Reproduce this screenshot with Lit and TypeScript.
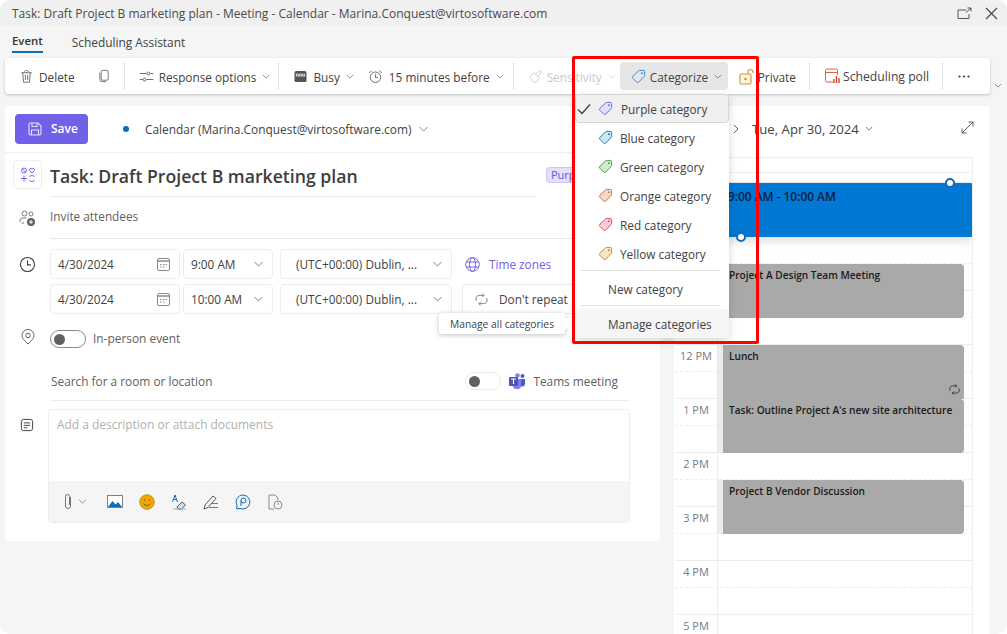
import { LitElement, html, css, svg } from "lit";
import { customElement } from "lit/decorators.js";

const chev = (cls = "chev") => html`<svg class=${cls} viewBox="0 0 10 6"><path d="M1 1l4 4 4-4" fill="none" stroke="currentColor" stroke-width="1"/></svg>`;
const tag = (stroke: string, fill: string) => html`<svg class="tag" viewBox="0 0 16 16"><path d="M9.2 1.5h4a1.3 1.3 0 0 1 1.3 1.3v4.1a1.5 1.5 0 0 1-.45 1L8.2 14a1.5 1.5 0 0 1-2.1 0L2 9.9a1.5 1.5 0 0 1 0-2.1l6.1-5.85a1.5 1.5 0 0 1 1.1-.45z" fill=${fill} stroke=${stroke} stroke-width="1"/><circle cx="11.6" cy="4.4" r="1" fill=${stroke}/></svg>`;
const ico = (w: number, body: unknown) => html`<svg width=${w} height=${w} viewBox="0 0 20 20" fill="none" stroke="#616161" stroke-width="1.2">${body}</svg>`;

const repeat = (w = 16, c = "#616161") => html`<svg width=${w} height=${w} viewBox="0 0 20 20" fill="none" stroke=${c} stroke-width="1.2"><path d="M11 2l2.500 2.500L11 7M13 4.500H7a4.500 4.500 0 0 0-3.500 7.300M9 18l-2.500-2.500L9 13M7 15.500h6a4.500 4.500 0 0 0 3.500-7.300"/></svg>`;

const cats: [string, string, string][] = [
  ["Blue category", "#1c7a9c", "#c9eaf5"],
  ["Green category", "#3f9a3f", "#cdeccd"],
  ["Orange category", "#c9703f", "#f5d9c8"],
  ["Red category", "#d94a5c", "#f9ced4"],
  ["Yellow category", "#b8883a", "#f8e6c0"],
];
const hours = ["9 AM", "10 AM", "11 AM", "12 PM", "1 PM", "2 PM", "3 PM", "4 PM", "5 PM"];
const events: { t: string; top: number; h: number; rep?: boolean; flat?: boolean }[] = [
  { t: "Project A Design Team Meeting", top: 91, h: 54 },
  { t: "Lunch", top: 172, h: 54, rep: true, flat: true },
  { t: "Task: Outline Project A's new site architecture", top: 226, h: 54 },
  { t: "Project B Vendor Discussion", top: 307, h: 54 },
];

@customElement("app-root")
export class AppRoot extends LitElement {
  static styles = css`
    :host { display: block; height: 100vh; overflow: hidden; background: #fff; font-family: "Open Sans", "Noto Sans", sans-serif; color: #424242; font-size: 12px; }
    * { box-sizing: border-box; }
    svg { display: block; flex: none; }
    .win { position: relative; height: 100%; background: #f5f5f5; border-radius: 10px; overflow: hidden; display: flex; flex-direction: column; }
    .titlebar { height: 26px; flex: none; background: #f0f0f0; display: flex; align-items: center; padding: 0 9px 0 12px; color: #4a4a4a; font-size: 12px; }
    .titlebar .sp { flex: 1; }
    .titlebar .wbtn { margin-left: 13px; color: #555; }
    .tabs { height: 32px; flex: none; display: flex; align-items: stretch; padding-left: 12px; gap: 29px; font-size: 11.9px; color: #424242; }
    .tab { display: flex; align-items: center; padding-top: 4px; height: 27px; }
    .tab.on { font-size: 11.4px; font-weight: 600; color: #333; border-bottom: 2px solid #0f6cbd; }
    .tbrow { flex: none; position: relative; height: 36px; margin: 0 17px 12px 5px; background: #fff; border-radius: 4px; box-shadow: 0 1px 3px rgba(0,0,0,.22); display: flex; align-items: center; font-size: 11.8px; color: #424242; }
    .tb { display: flex; align-items: center; height: 28px; white-space: nowrap; }
    .tb > span { padding-top: 1px; }
    .tb .chev, .chev { width: 8px; height: 5px; color: #757575; }
    .div { width: 1px; height: 28px; background: #e2e2e2; flex: none; }
    .tb-del { margin-left: 14px; gap: 5px; }
    .tb-copy { margin-left: 22px; margin-right: 13px; }
    .tb-resp { margin-left: 14px; gap: 5px; margin-right: 8px; }
    .tb-resp .c { margin-left: 1px; }
    .tb-busy { margin-left: 15px; gap: 6px; }
    .tb-alarm { margin-left: 14px; gap: 6px; margin-right: 9px; }
    .tb-sens { margin-left: 14px; gap: 4px; color: #c8c8c8; }
    .tb-sens .c { margin-left: 2px; }
    .tb-sens .chev { color: #d0d0d0; }
    .tb-cat { margin-left: 4px; width: 108px; background: #e6e6e6; border-radius: 4px; padding-left: 11px; gap: 4px; }
    .tb-cat .c { margin-left: 2px; }
    .tb-priv { margin-left: 11px; gap: 3px; margin-right: 13px; }
    .tb-poll { margin-left: 14px; gap: 3px; margin-right: 13px; font-size: 12.2px; }
    .tb-more { margin-left: 15px; }
    .tb-chev { position: absolute; right: -12px; top: 25px; }
    .main { flex: 1; min-height: 0; display: flex; align-items: flex-start; gap: 14px; padding-left: 5px; }
    .left { width: 655px; background: #fff; border-radius: 4px; padding-bottom: 18px; }
    .saverow { height: 47px; border-bottom: 1px solid #f0f0f0; display: flex; align-items: center; padding: 0 0 1px 10px; }
    .save { width: 73px; height: 30px; border-radius: 4px; background: #7160e8; color: #fff; font-weight: 600; font-size: 12px; display: flex; align-items: center; padding-left: 13px; gap: 9px; }
    .dot { width: 6px; height: 6px; border-radius: 50%; background: #0f6cbd; margin-left: 35px; }
    .cal { margin-left: 16px; font-size: 11.9px; color: #424242; }
    .saverow .chev { margin-left: 7px; width: 11px; height: 6px; color: #8a8a8a; }
    .titlerow { height: 44px; display: flex; padding-left: 8px; }
    .apps { margin-top: 7px; width: 29px; height: 29px; border: 1px solid #eee; border-radius: 4px; display: flex; align-items: center; justify-content: center; }
    .ttl { margin-left: 8px; width: 485px; border-bottom: 1px solid #ececec; font-size: 17.65px; font-weight: 600; color: #3d3d3d; display: flex; align-items: center; padding-top: 2px; }
    .badge { margin: 14px 0 0 11px; height: 16px; width: 40px; background: #e4dffb; border: 1px solid #cfc8f5; border-radius: 3px; color: #6a5bd8; font-size: 11px; line-height: 14px; padding-left: 4px; overflow: hidden; }
    .row { display: flex; }
    .ic { width: 45px; flex: none; display: flex; justify-content: center; align-items: center; }
    .invite { height: 42px; }
    .invite .f { width: 580px; border-bottom: 1px solid #e8e8e8; color: #616161; font-size: 11.8px; display: flex; align-items: center; padding-bottom: 4px; }
    .dates { margin-top: 10px; }
    .dates .ic { height: 30px; }
    .dcol { display: flex; flex-direction: column; gap: 5px; }
    .drow { display: flex; height: 30px; align-items: stretch; }
    .inp { border: 1px solid #ececec; border-radius: 4px; display: flex; align-items: center; justify-content: space-between; padding: 0 9px 0 7px; font-size: 11.8px; color: #424242; white-space: nowrap; }
    .i-date { width: 130px; }
    .i-time { width: 90px; margin-left: 3px; padding-right: 8px; }
    .i-tz { width: 172px; margin-left: 7px; padding: 0 8px 0 15px; }
    .i-tz .chev, .i-time .chev { width: 11px; height: 6px; color: #808080; }
    .tz { margin-left: 13px; display: flex; align-items: center; gap: 9px; color: #7160e8; font-size: 11.8px; }
    .rep { margin-left: 10px; width: 160px; padding-left: 11px; justify-content: flex-start; gap: 10px; }
    .person { margin-top: 16px; height: 18px; align-items: center; color: #616161; font-size: 11.9px; gap: 7px; }
    .person span { margin-top: -2px; }
    .person .ic { margin-right: -7px; margin-top: -4px; }
    .tog { width: 36px; height: 18px; border: 1px solid #8a8a8a; border-radius: 9px; display: flex; align-items: center; padding-left: 3px; }
    .tog i { width: 11px; height: 11px; border-radius: 50%; background: #616161; }
    .tog.lt { border-color: #ececec; padding-left: 3px; }
    .search { margin: 15px 0 0 45px; width: 580px; height: 38px; border-bottom: 1px solid #ececec; display: flex; align-items: center; padding: 0 12px 1px 1px; font-size: 11.85px; color: #616161; }
    .search .sp { flex: 1; }
    .teams { margin-left: 8px; margin-right: 8px; }
    .desc { margin-top: 8px; padding-right: 30px; }
    .desc .ic { width: 43px; height: 31px; align-items: center; }
    .box { width: 582px; height: 114px; border: 1px solid #ececec; border-radius: 4px; display: flex; flex-direction: column; overflow: hidden; }
    .ph { flex: 1; padding: 6px 8px; color: #b0b0b0; font-size: 11.95px; }
    .bt { height: 41px; background: #f5f5f5; display: flex; align-items: center; padding-left: 14px; }
    .bt .chev { margin-left: 5px; width: 9px; height: 5px; }
    .bt svg.b { margin-left: 16px; }
    .bt svg.b0 { margin-left: 20px; }
    .bt svg.bl { margin-left: 17px; }
    .right { width: 315px; align-self: stretch; background: #fff; border-radius: 4px 4px 0 0; display: flex; flex-direction: column; padding-right: 16px; overflow: hidden; }
    .chead { height: 51px; flex: none; display: flex; align-items: center; font-size: 13.2px; color: #424242; padding-left: 59px; padding-bottom: 6px; }
    .chead .gt { margin-right: 13px; width: 6px; height: 10px; }
    .chead .chev { margin-left: 6px; color: #616161; }
    .chead .exp { margin-left: auto; margin-right: -1px; margin-top: -3px; }
    .allday { height: 16px; flex: none; margin-left: 43px; border: 1px solid #eee; }
    .grid { flex: 1; position: relative; overflow: hidden; border-right: 1px solid #eee; margin-left: 1px; }
    .stub { height: 9px; margin-left: 42px; border-left: 1px solid #eee; }
    .hr { position: relative; height: 54px; display: grid; grid-template-columns: 43px 1fr; border-top: 1px solid #ececec; }
    .hr::after { content: ""; position: absolute; left: 0; right: 0; top: 26px; border-bottom: 1px dashed #ececec; }
    .hr .lb { text-align: center; font-size: 11px; color: #7a7a7a; padding-top: 3px; border-right: 1px solid #ececec; }
    .ev { position: absolute; left: 42px; right: 8px; border-left: 6px solid #ececec; }
    .ev .in { height: 100%; background: #a9a9a9; border-radius: 0 4px 4px 0; padding: 4px 6px; font-size: 10.1px; font-weight: 600; color: #1a1a1a; position: relative; }
    .ev.flat .in { border-radius: 0 4px 0 0; }
    .ev .rp { position: absolute; right: 3px; bottom: 3px; }
    .blue { position: absolute; left: 43px; right: 0; top: 10px; height: 54px; background: #0078d4; border-radius: 1px; box-shadow: 0 4px 10px rgba(0,0,0,.14); padding: 5px 10px; font-size: 11.9px; font-weight: 600; color: #10203a; }
    .hd { position: absolute; width: 10px; height: 10px; border-radius: 50%; background: #fff; border: 2px solid #0f6cbd; }
    .hd.a { top: -5px; left: 227px; }
    .hd.b { top: 49px; left: 18px; }
    .menu { position: absolute; left: 575px; top: 94px; width: 154px; height: 244px; background: #fff; border-radius: 4px; box-shadow: 0 3px 10px rgba(0,0,0,.16); display: flex; flex-direction: column; font-size: 11.8px; color: #424242; }
    .mi { height: 29px; flex: none; display: flex; align-items: center; padding-left: 23px; gap: 7px; }
    .mi.sel { background: #f0f0f0; border: 1px solid #d6d6d6; border-radius: 4px; padding-left: 0; gap: 0; }
    .mi.sel .ck { margin: 0 7px 0 1px; }
    .mi.sel .tag { margin-right: 8px; }
    .mi.tx { padding-left: 33px; }
    .tag { width: 15px; height: 15px; flex: none; }
    .sep { height: 1px; background: #e2e2e2; margin: 2px 9px 3px 5px; flex: none; }
    .mi.hov { background: #f5f5f5; }
    .tip { position: absolute; left: 439px; top: 313px; width: 126px; height: 21px; background: #fff; border-radius: 2px; box-shadow: 0 1px 5px rgba(0,0,0,.25); font-size: 10.3px; color: #424242; display: flex; align-items: center; padding-left: 11px; white-space: nowrap; }
    .tip::after { content: ""; position: absolute; right: -5px; top: 6px; width: 9px; height: 9px; background: #fff; transform: rotate(45deg); }
    .red { position: absolute; left: 572px; top: 56px; width: 187px; height: 288px; border: 3px solid #f00; border-radius: 2px; pointer-events: none; }
  `;

  render() {
    return html`<div class="win">
      <div class="titlebar">
        <span>Task: Draft Project B marketing plan - Meeting - Calendar - Marina.Conquest@virtosoftware.com</span>
        <span class="sp"></span>
        <svg class="wbtn" width="15" height="13" viewBox="0 0 15 13" fill="none" stroke="#555"><path d="M9 3H1v8.500h11V7M9 5.500L14 1M10.500 1H14v3.500"/></svg>
        <svg class="wbtn" width="13" height="13" viewBox="0 0 13 13" fill="none" stroke="#444" stroke-width="1.100"><path d="M1 1l11 11M12 1L1 12"/></svg>
      </div>
      <div class="tabs"><div class="tab on">Event</div><div class="tab">Scheduling Assistant</div></div>
      <div class="tbrow">
        <div class="tb tb-del">${ico(15, svg`<path d="M3 5h14M5 5l1 12.500h8L15 5M7 3.500C8 1.500 12 1.500 13 3.500M8.500 8v6.500M11.500 8v6.500"/>`)}<span>Delete</span></div>
        <div class="tb tb-copy">${ico(14, svg`<rect x="6" y="2" width="10" height="14" rx="2"/><path d="M4 5v10a3 3 0 0 0 3 3h6"/>`)}</div>
        <div class="div"></div>
        <div class="tb tb-resp">${ico(15, svg`<path d="M1 6h9M15 6h4M1 14h4M10 14h9"/><circle cx="12.500" cy="6" r="2"/><circle cx="7.500" cy="14" r="2"/>`)}<span>Response options</span><span class="c">${chev()}</span></div>
        <div class="div"></div>
        <div class="tb tb-busy"><svg width="13" height="13" viewBox="0 0 14 14"><rect x="0.500" y="1" width="13" height="12" rx="2" fill="#555"/><path d="M2 4h10v3H2z" fill="#ddd"/><path d="M3 7l2-3M6 7l2-3M9 7l2-3" stroke="#555" stroke-width=".8"/></svg><span>Busy</span><span class="c">${chev()}</span></div>
        <div class="tb tb-alarm">${ico(15, svg`<circle cx="10" cy="11" r="7"/><path d="M10 7v4.500h3.500M1.500 5.500L5 2M18.500 5.500L15 2"/>`)}<span>15 minutes before</span><span class="c">${chev()}</span></div>
        <div class="div"></div>
        <div class="tb tb-sens"><svg width="15" height="15" viewBox="0 0 20 20" fill="none" stroke="#cfcfcf" stroke-width="1.300"><path d="M2 11l6-6 7 7-4 6c-3 0-7-3-9-7zM10 7l6-5 2 2-5 6"/></svg><span>Sensitivity</span><span class="c">${chev()}</span></div>
        <div class="tb tb-cat">${tag("#2b88d8", "none")}<span>Categorize</span><span class="c">${chev()}</span></div>
        <div class="tb tb-priv"><svg width="16" height="17" viewBox="0 0 16 17" fill="none" stroke="#c8973c" stroke-width="1.100"><rect x="1" y="6" width="11" height="10" rx="1.500" fill="#fdf6e6"/><path d="M9 6V4a2.500 2.500 0 0 1 5 0v1"/><circle cx="6.500" cy="11" r=".8" fill="#c8973c"/></svg><span>Private</span></div>
        <div class="div"></div>
        <div class="tb tb-poll"><svg width="16" height="16" viewBox="0 0 16 16" fill="none" stroke="#d9663c"><path d="M9 14H3a1.500 1.500 0 0 1-1.500-1.500v-10A1.500 1.500 0 0 1 3 1h9a1.500 1.500 0 0 1 1.500 1.500V7M1.500 4.500h12"/><path d="M10 11v4M12.500 8v7M15 10v5" stroke="#c4501b" stroke-width="1.400"/></svg><span>Scheduling poll</span></div>
        <div class="div"></div>
        <div class="tb tb-more"><svg width="12" height="3" viewBox="0 0 12 3" fill="#333"><circle cx="1.500" cy="1.500" r="1.100"/><circle cx="6" cy="1.500" r="1.100"/><circle cx="10.500" cy="1.500" r="1.100"/></svg></div>
        <div class="tb-chev">${chev()}</div>
      </div>
      <div class="main">
        <div class="left">
          <div class="saverow">
            <div class="save"><svg width="14" height="14" viewBox="0 0 14 14" fill="none" stroke="#e6e2fc" stroke-width="1.100"><path d="M1 2.500A1.500 1.500 0 0 1 2.500 1h7.500L13 4v7.500a1.500 1.500 0 0 1-1.500 1.500h-9A1.500 1.500 0 0 1 1 11.500zM4 1v3.500h5V1M3.500 13V8h7v5"/></svg><span>Save</span></div>
            <span class="dot"></span><span class="cal">Calendar (Marina.Conquest@virtosoftware.com)</span>${chev()}
          </div>
          <div class="titlerow">
            <div class="apps"><svg width="16" height="15" viewBox="0 0 16 15" fill="none" stroke="#7160e8" stroke-width="1"><circle cx="4" cy="3.500" r="2.500"/><path d="M2.500 2l3 3M12 6l-2.600-2.700a1.500 1.500 0 0 1 2.600-1.300 1.500 1.500 0 0 1 2.600 1.300zM1 11.500h6M4 8.500v6M9.500 10c1-2 4-2 5 0M14.500 13c-1 2-4 2-5 0"/></svg></div>
            <div class="ttl">Task: Draft Project B marketing plan</div>
            <div class="badge">Purple</div>
          </div>
          <div class="row invite">
            <div class="ic"><svg width="17" height="16" viewBox="0 0 17 16" fill="none" stroke="#7a7a7a"><circle cx="5.500" cy="3.500" r="2.500"/><circle cx="12" cy="4" r="2"/><path d="M1 12v-1.500A2.500 2.500 0 0 1 3.500 8h4M5 13H2.500"/><circle cx="12" cy="12" r="4" fill="#616161" stroke="none"/><path d="M12 10v4M10 12h4" stroke="#fff"/></svg></div>
            <div class="f">Invite attendees</div>
          </div>
          <div class="row dates">
            <div class="ic">${ico(17, svg`<circle cx="10" cy="10" r="8.300" stroke="#424242" stroke-width="1.300"/><path d="M10 5v5.500h4" stroke="#424242" stroke-width="1.300"/>`)}</div>
            <div class="dcol">
              <div class="drow">
                <div class="inp i-date"><span>4/30/2024</span>${this.calIcon()}</div>
                <div class="inp i-time"><span>9:00 AM</span>${chev()}</div>
                <div class="inp i-tz"><span>(UTC+00:00) Dublin, ...</span>${chev()}</div>
                <div class="tz"><svg width="15" height="15" viewBox="0 0 15 15" fill="none" stroke="#7160e8"><circle cx="7.500" cy="7.500" r="6.800"/><ellipse cx="7.500" cy="7.500" rx="3" ry="6.800"/><path d="M1.500 5h12M1.500 10h12"/></svg><span>Time zones</span></div>
              </div>
              <div class="drow">
                <div class="inp i-date"><span>4/30/2024</span>${this.calIcon()}</div>
                <div class="inp i-time"><span>10:00 AM</span>${chev()}</div>
                <div class="inp i-tz"><span>(UTC+00:00) Dublin, ...</span>${chev()}</div>
                <div class="inp rep">${repeat(15, "#757575")}<span>Don't repeat</span></div>
              </div>
            </div>
          </div>
          <div class="row person">
            <div class="ic"><svg width="14" height="16" viewBox="0 0 14 16" fill="none" stroke="#616161"><path d="M7 15C4 12 1 9.500 1 6.500a6 6 0 0 1 12 0C13 9.500 10 12 7 15z"/><circle cx="7" cy="6.500" r="2.300"/></svg></div>
            <div class="tog"><i></i></div><span>In-person event</span>
          </div>
          <div class="search">
            <span>Search for a room or location</span><span class="sp"></span>
            <div class="tog lt"><i></i></div>
            <svg class="teams" width="16" height="16" viewBox="0 0 16 16"><circle cx="13.500" cy="3" r="2" fill="#5059c9"/><path d="M10 6h6v5a2.500 2.500 0 0 1-4 2z" fill="#5059c9"/><circle cx="8.500" cy="2.500" r="2.300" fill="#7b83eb"/><path d="M4 6h8v7a3 3 0 0 1-3 3H7a3 3 0 0 1-3-3z" fill="#7b83eb"/><rect x="0" y="4" width="9" height="9" rx="1" fill="#4b53bc"/><path d="M2 6h5M4.500 6v5" stroke="#fff" stroke-width="1.200"/></svg>
            <span>Teams meeting</span>
          </div>
          <div class="row desc">
            <div class="ic">${ico(14, svg`<rect x="2" y="2" width="16" height="16" rx="3" stroke="#424242" stroke-width="1.400"/><path d="M5.500 7h9M5.500 10.500h9M5.500 14h5" stroke="#424242" stroke-width="1.400"/>`)}</div>
            <div class="box">
              <div class="ph">Add a description or attach documents</div>
              <div class="bt">
                <svg width="10" height="17" viewBox="0 0 10 17" fill="none" stroke="#757575"><path d="M7.500 4v9a2.500 2.500 0 0 1-5 0V3.500a2 2 0 0 1 4 0v8.500"/></svg>${chev()}
                <svg class="b0" width="16" height="13" viewBox="0 0 16 13"><rect x=".5" y=".5" width="15" height="12" fill="#fff" stroke="#808080"/><path d="M1 12l4.500-6 3 3.500L11 7l4 5z" fill="#0f6cbd"/></svg>
                <svg class="b" width="16" height="16" viewBox="0 0 16 16"><circle cx="8" cy="8" r="7.300" fill="#f5a800" stroke="#b98518" stroke-width=".8"/><circle cx="5.500" cy="6" r=".8" fill="#654"/><circle cx="10.500" cy="6" r=".8" fill="#654"/><path d="M4.500 9.500c1.500 2.500 5.500 2.500 7 0" stroke="#654" fill="none"/></svg>
                <svg class="b" width="16" height="16" viewBox="0 0 16 16" fill="none"><path d="M1.500 8L4 1l2.500 7M2.500 5.500h3" stroke="#0f6cbd"/><path d="M6 13l5-5 3.500 3-4 4H7z" stroke="#555" fill="#ddd"/><path d="M2 15h13" stroke="#8ab8e0"/></svg>
                <svg class="b" width="16" height="16" viewBox="0 0 16 16" fill="none"><path d="M1 15l1-4 8-9 3 2.500-8 9z" stroke="#555"/><path d="M6 13.500h9M9 9.500h6" stroke="#2b88d8"/></svg>
                <svg class="b" width="16" height="16" viewBox="0 0 16 16" fill="none" stroke="#0f6cbd"><path d="M8 1a7 7 0 1 1-3 13.400L1.500 15l.6-3.500A7 7 0 0 1 8 1z"/><circle cx="8.500" cy="6.500" r="2.500"/><path d="M6 6.500V12"/></svg>
                <svg class="bl" width="15" height="16" viewBox="0 0 15 16" fill="none" stroke="#8a8a8a"><path d="M6 15H1V1h6l3 3v2"/><circle cx="10" cy="11" r="4"/><path d="M10 8.500V11"/></svg>
              </div>
            </div>
          </div>
        </div>
        <div class="right">
          <div class="chead">
            <svg class="gt" viewBox="0 0 6 10" fill="none" stroke="#616161"><path d="M1 1l4 4-4 4"/></svg>
            <span>Tue, Apr 30, 2024</span>${chev()}
            <svg class="exp" width="13" height="13" viewBox="0 0 13 13" fill="none" stroke="#616161"><path d="M1 12L12 1M7.500 1H12v4.500M1 7.500V12h4.500"/></svg>
          </div>
          <div class="allday"></div>
          <div class="grid">
            <div class="stub"></div>
            ${hours.map((h) => html`<div class="hr"><div class="lb">${h}</div><div></div></div>`)}
            <div class="blue">9:00 AM - 10:00 AM<span class="hd a"></span><span class="hd b"></span></div>
            ${events.map((e) => html`<div class="ev ${e.flat ? "flat" : ""}" style="top:${e.top}px;height:${e.h}px"><div class="in">${e.t}${e.rep ? html`<span class="rp">${repeat(13, "#222")}</span>` : ""}</div></div>`)}
          </div>
        </div>
      </div>
      <div class="tip">Manage all categories</div>
      <div class="menu">
        <div class="mi sel"><svg class="ck" width="14" height="12" viewBox="0 0 14 12" fill="none" stroke="#424242" stroke-width="1.300"><path d="M1 6.500l4 4L13 1.500"/></svg>${tag("#7160e8", "#e4dffb")}<span>Purple category</span></div>
        ${cats.map(([n, s, f]) => html`<div class="mi">${tag(s, f)}<span>${n}</span></div>`)}
        <div class="sep"></div>
        <div class="mi tx">New category</div>
        <div class="sep"></div>
        <div class="mi tx hov">Manage categories</div>
      </div>
      <div class="red"></div>
    </div>`;
  }

  calIcon() {
    return html`<svg width="13" height="13" viewBox="0 0 13 13" fill="none" stroke="#8a8a8a"><rect x=".5" y=".5" width="12" height="12" rx="1.500"/><path d="M.5 3h12" stroke-width="1.500"/><path d="M3 6.500h1.500M6 6.500h1.500M8.500 6.500H10M3 9h1.500M6 9h1.500" /></svg>`;
  }
}
